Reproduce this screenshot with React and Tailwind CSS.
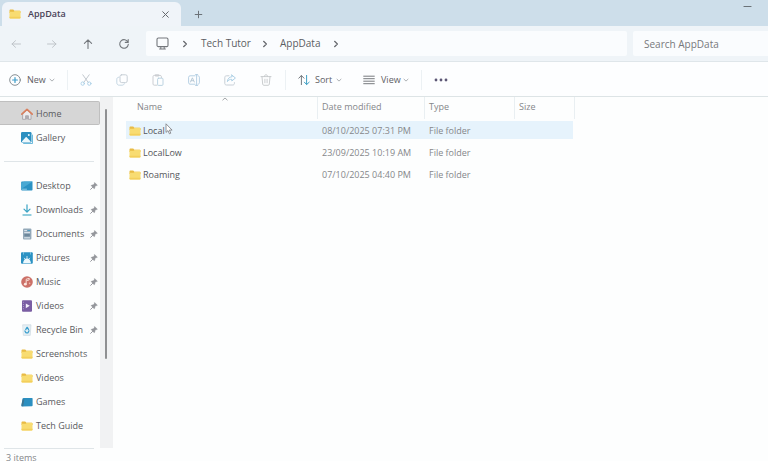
import React from "react";

function Folder({ className = "" }) {
  return (
    <svg viewBox="0 0 12 10" className={"h-[10px] w-3 shrink-0 " + className} aria-hidden="true">
      <path d="M0.5 1.3C.5.8.9.5 1.3.5h2.9L5.5 1.8h5.2c.5 0 .8.3.8.8V4H.5z" fill="#e9bb45" />
      <path d="M.5 2.8h4.2l1.2-1h4.9c.4 0 .7.3.7.7v6.2c0 .5-.3.8-.8.8H1.3c-.5 0-.8-.3-.8-.8z" fill="#f8dc72" />
      <path d="M.5 7.8h11v.9c0 .5-.3.8-.8.8H1.3c-.5 0-.8-.3-.8-.8z" fill="#f3cf5c" />
    </svg>
  );
}

function Glyph({ size = "size-3", children, box = "0 0 12 12" }) {
  return (
    <svg viewBox={box} className={size + " shrink-0"} fill="none" strokeLinecap="round" strokeLinejoin="round" aria-hidden="true">
      {children}
    </svg>
  );
}

const HomeIcon = () => (
  <Glyph>
    <path d="M2 5.5 6 2l4 3.5V11.3H7.4V7.8H4.6v3.5H2z" fill="#ececee" stroke="#a19da3" strokeWidth=".8" />
    <path d="M4.6 7.8h2.8v3.5H4.6z" fill="#aeabb0" />
    <path d="M.8 6.2 6 1.3l5.2 4.9" stroke="#d9805f" strokeWidth="1.7" />
  </Glyph>
);
const GalleryIcon = () => (
  <Glyph>
    <rect x="0" y="0" width="10.5" height="10.5" rx="1.2" fill="#2b8fc0" />
    <path d="M11 2.5c.6 0 1 .4 1 1V11c0 .6-.4 1-1 1H3c-.5 0-1-.4-1-1h9z" fill="#6ebbdc" />
    <path d="M.8 9.6 4.5 5.4c.4-.4.9-.4 1.3 0l3.9 4.2c-.3.4-.7.5-1 .5H2c-.6 0-1-.1-1.2-.5z" fill="#eef8fc" />
    <circle cx="7.8" cy="3" r="1" fill="#eef8fc" />
  </Glyph>
);
const DesktopIcon = () => (
  <Glyph>
    <path d="M1.2 1.5h10.3v8.2c0 .5-.3.8-.8.8H1.1c-.6 0-.9-.3-.9-.8V2.5c0-.6.4-1 1-1z" fill="#2b92c3" />
    <path d="M.2 3.2 3 1.5h8.5L.2 9z" fill="#49a9d3" />
    <path d="M1.5 9.2h4" stroke="#a9dcf0" strokeWidth=".8" />
  </Glyph>
);
const DownloadIcon = () => (
  <Glyph>
    <path d="M6 .8v7M3 5.2 6 8.2l3-3" stroke="#3aa3c4" strokeWidth="1.2" />
    <path d="M2 11h8" stroke="#6dbdd2" strokeWidth="1.3" />
  </Glyph>
);
const DocumentIcon = () => (
  <Glyph>
    <rect x="2" y=".4" width="8.4" height="11.2" rx="1" fill="#94a9b9" />
    <path d="M3.6 2.6h2M3.6 4.6h5M3.6 9.8h5" stroke="#e6eef4" strokeWidth=".9" />
    <rect x="3.4" y="6" width="5.4" height="2.4" fill="#6d889c" />
    <path d="M7 2.5h1.8" stroke="#4c9fc8" strokeWidth="1.2" />
  </Glyph>
);
const PictureIcon = () => (
  <Glyph>
    <rect x="0" y=".3" width="11.8" height="11.4" rx="1" fill="#2b92c3" />
    <path d="M2 11.2c.3-2.6 2-4.6 4-4.6s3.700 2 4 4.600z" fill="#ecf8fd" />
    <path d="M6 4.400v2.400M3.400 6.200l1 1.400M8.600 6.200l-1 1.400" stroke="#ecf8fd" strokeWidth=".8" />
    <path d="M2.500 0v2.200M9.500 0v2.200" stroke="#8fcbe4" strokeWidth=".8" />
  </Glyph>
);
const MusicIcon = () => (
  <Glyph>
    <circle cx="6" cy="6" r="5.8" fill="#cc7168" />
    <path d="M5.2 8V3.2l3-.9v1.6l-2.3.7" stroke="#fbe6df" strokeWidth=".9" />
    <circle cx="4.3" cy="8.2" r="1.4" fill="#fbe6df" />
    <circle cx="8.6" cy="7.4" r=".8" fill="#eeb7a7" />
  </Glyph>
);
const VideoIcon = () => (
  <Glyph>
    <rect x="1" y=".3" width="10" height="11.4" rx="1" fill="#7a5ea3" />
    <path d="M2.4 1.8v8.6" stroke="#c2b2da" strokeWidth=".9" strokeDasharray=".8 1.4" strokeLinecap="butt" />
    <path d="M4.8 3.4v4.8L8.8 5.8z" fill="#f3effa" />
  </Glyph>
);
const BinIcon = () => (
  <Glyph>
    <path d="M2 .8h8l-.8 10.6H2.8z" fill="#e5f0f5" stroke="#c6d4dc" strokeWidth=".6" />
    <path d="M6 3.4 4.7 5.6M6.3 3.4l1.3 2.2M8 6.8 7 8.8H5.4M3.9 7l.9 1.6" stroke="#3b9fcd" strokeWidth="1.2" />
  </Glyph>
);
const GamesIcon = () => (
  <Glyph>
    <path d="M2.6 2h8.4c.4 0 .6.2.6.6v6.8c0 .5-.3.8-.8.8L1 10.6c-.5 0-.8-.3-.7-.8l1.2-7c.1-.5.5-.8 1.1-.8z" fill="#2b8fc0" />
    <path d="M.4 9.6 1.7 3.5l1.6-.2-1.2 7.1z" fill="#3e7591" />
  </Glyph>
);
const Pin = () => (
  <Glyph size="size-2" box="0 0 10 10">
    <path d="M6 .8 9.2 4l-1 .5-.6-.1-1.5 1.5-.1 1.8-.8.6L1.4 4.5l.8-.8 1.7-.1 1.6-1.5-.1-.7z" fill="#94969b" stroke="#8e9095" strokeWidth=".6" />
    <path d="M3.2 6.8.8 9.2" stroke="#868890" strokeWidth="1.1" />
  </Glyph>
);

const Chevron = () => (
  <Glyph size="size-2" box="0 0 8 8">
    <path d="M2.6 1.3 5.4 4 2.6 6.7" stroke="#66686d" strokeWidth="1.2" />
  </Glyph>
);
const Caret = () => (
  <Glyph size="size-[6px]" box="0 0 6 6">
    <path d="M1 2.2 3 4.1 5 2.2" stroke="#a3a7ab" strokeWidth=".9" />
  </Glyph>
);

const Cut = () => (
  <Glyph>
    <path d="M2.8.8 8.2 8.4M9.2.8 3.8 8.4" stroke="#bcc3ca" strokeWidth=".9" />
    <circle cx="2.7" cy="9.6" r="1.7" stroke="#a9cfe6" strokeWidth=".9" />
    <circle cx="9.3" cy="9.6" r="1.7" stroke="#a9cfe6" strokeWidth=".9" />
  </Glyph>
);
const Copy = () => (
  <Glyph>
    <rect x="4" y=".8" width="7.2" height="7.8" rx="1.6" stroke="#c2cbd2" strokeWidth=".9" />
    <path d="M3 3.2c-1.3 0-2.2.7-2.2 2v3.6c0 1.5 1 2.4 2.4 2.4h3c1 0 1.8-.5 2.1-1.5" stroke="#bed3e0" strokeWidth=".9" />
  </Glyph>
);
const Paste = () => (
  <Glyph>
    <path d="M5 11.2H2.2c-.7 0-1.2-.5-1.2-1.2V2.6c0-.7.5-1.2 1.2-1.2h6c.7 0 1.2.5 1.2 1.2v1" stroke="#c6cace" strokeWidth=".9" />
    <path d="M3.7.7h3v1.4h-3z" stroke="#c6cace" strokeWidth=".8" />
    <rect x="5.6" y="4.2" width="5.4" height="7.2" rx="1" stroke="#b5cfdf" strokeWidth=".9" />
  </Glyph>
);
const Rename = () => (
  <Glyph>
    <path d="M7 1.8H2C1.2 1.8.6 2.4.6 3.2v5.6c0 .8.6 1.4 1.4 1.4h5M10 1.8c.8 0 1.4.6 1.4 1.4v5.6c0 .8-.6 1.4-1.4 1.4M8.6.6v10.8M7.5.6h2.2M7.5 11.4h2.2" stroke="#afcce1" strokeWidth=".9" />
    <path d="M2.5 8 4.4 3.8 6.3 8M3.2 6.7h2.4" stroke="#b2c5d3" strokeWidth=".9" />
  </Glyph>
);
const Share = () => (
  <Glyph>
    <path d="M5 1.8H2.4C1.4 1.8.8 2.4.8 3.4v6c0 1 .6 1.6 1.6 1.6h6.4c1 0 1.6-.6 1.6-1.6V8.6" stroke="#c2cbd2" strokeWidth=".9" />
    <path d="M7.8 1 11.4 4 7.8 7V5.3C5.8 5.2 4.5 6 3.4 7.6c.2-2.8 1.7-4.6 4.4-4.9z" stroke="#a4cbe2" strokeWidth=".9" />
  </Glyph>
);
const Trash = () => (
  <Glyph>
    <path d="M1 2.6h10M4.4 2.4c0-1 .7-1.6 1.6-1.6s1.6.6 1.6 1.6M2 2.8l.7 7.4c.1.7.5 1.1 1.2 1.1h4.2c.7 0 1.1-.4 1.2-1.1l.7-7.4M4.9 5.2v3.6M7.1 5.2v3.6" stroke="#c4c7ca" strokeWidth=".9" />
  </Glyph>
);

const actions = [
  ["Cut", Cut],
  ["Copy", Copy],
  ["Paste", Paste],
  ["Rename", Rename],
  ["Share", Share],
  ["Delete", Trash],
];

const places = [
  ["Desktop", DesktopIcon, true],
  ["Downloads", DownloadIcon, true],
  ["Documents", DocumentIcon, true],
  ["Pictures", PictureIcon, true],
  ["Music", MusicIcon, true],
  ["Videos", VideoIcon, true],
  ["Recycle Bin", BinIcon, true],
  ["Screenshots", Folder, false],
  ["Videos", Folder, false],
  ["Games", GamesIcon, false],
  ["Tech Guide", Folder, false],
];

const files = [
  ["Local", "08/10/2025 07:31 PM"],
  ["LocalLow", "23/09/2025 10:19 AM"],
  ["Roaming", "07/10/2025 04:40 PM"],
];

function Place({ label, Icon, pinned, active }) {
  return (
    <a
      href="#"
      className={
        "flex h-6 items-center gap-[3px] pt-[2px] pr-[2px] pl-[21px] " +
        (active ? "rounded-r-xs border border-l-0 border-[#bfbfbf] bg-[#d6d6d6]" : "")
      }
    >
      <Icon />
      <span className="flex-1 whitespace-nowrap">{label}</span>
      {pinned && <Pin />}
    </a>
  );
}

function TabBar() {
  return (
    <div className="flex h-[26px] shrink-0 bg-[#cddeea] pl-[2px]">
      <div className="mt-[2px] flex w-[179px] items-center rounded-t-md bg-[#f0f4f9] pr-[11px] pl-[7px]">
        <Folder />
        <span className="ml-[7px] flex-1 text-[9px] font-semibold text-[#4a4358]">AppData</span>
        <button aria-label="Close tab">
          <Glyph size="size-[9px]" box="0 0 9 9">
            <path d="M1.7 1.7l5.6 5.6M7.3 1.7 1.7 7.3" stroke="#66696e" />
          </Glyph>
        </button>
      </div>
      <button aria-label="New tab" className="mt-[2px] ml-[13px]">
        <Glyph size="size-[9px]" box="0 0 9 9">
          <path d="M4.5 1.2v6.6M1.2 4.5h6.6" stroke="#6b7278" />
        </Glyph>
      </button>
      <button aria-label="Minimize" className="mr-4 mb-[14px] ml-auto">
        <Glyph size="size-[9px]" box="0 0 9 9">
          <path d="M1 4.5h7" stroke="#6b7278" strokeWidth="1.2" />
        </Glyph>
      </button>
    </div>
  );
}

function AddressBar() {
  return (
    <div className="flex h-9 shrink-0 items-center gap-[6px] border-b border-[#dfe6ea] bg-[#eff4f8] text-[10px] text-[#5c5d63]">
      <div className="flex w-[140px] shrink-0 items-center gap-6 pl-[10px]">
        <button aria-label="Back">
          <Glyph>
            <path d="M10.500 6H2M5.500 2.700 2 6l3.500 3.300" stroke="#c0c5ca" />
          </Glyph>
        </button>
        <button aria-label="Forward">
          <Glyph>
            <path d="M1.500 6H10M6.500 2.700 10 6 6.500 9.300" stroke="#c0c5ca" />
          </Glyph>
        </button>
        <button aria-label="Up">
          <Glyph>
            <path d="M6 10.500V2M2.400 5.400 6 1.800l3.600 3.600" stroke="#74787d" strokeWidth="1.1" />
          </Glyph>
        </button>
        <button aria-label="Refresh">
          <Glyph>
            <path d="M10 4.300A4.300 4.300 0 1 0 10.300 6.400M10.200 1.500v2.900H7.300" stroke="#74787d" strokeWidth="1.1" />
          </Glyph>
        </button>
      </div>
      <nav className="flex h-[25px] flex-1 items-center rounded-xs bg-[#fafcfe] pl-[10px] whitespace-nowrap">
        <Glyph size="size-[13px]" box="0 0 13 13">
          <rect x="1" y="1" width="11" height="8.6" rx="1.4" stroke="#74777c" strokeWidth="1.1" />
          <path d="M4.8 9.8v1.8M8.2 9.8v1.8M3.6 12h5.8" stroke="#74777c" />
        </Glyph>
        <span className="ml-3 flex w-5 shrink-0"><Chevron /></span>
        <a href="#" className="w-[60px]">Tech Tutor</a>
        <span className="flex w-[19px] shrink-0"><Chevron /></span>
        <a href="#" className="w-[52px]">AppData</a>
        <Chevron />
      </nav>
      <input
        type="search"
        aria-label="Search AppData"
        placeholder="Search AppData"
        className="h-[25px] w-[135px] rounded-l-xs bg-[#fafcfe] pl-[11px] outline-none placeholder:text-[#77787c]"
      />
    </div>
  );
}

function Toolbar() {
  return (
    <div className="flex h-[35px] shrink-0 items-center border-b border-[#dde4e6] bg-[#fdfeff] pt-[2px] pl-[9px] text-[#5f6065]">
      <button className="flex w-[58px] items-center">
        <Glyph>
          <circle cx="6" cy="6" r="5.3" stroke="#7c8388" strokeWidth=".9" />
          <path d="M6 3.6v4.8M3.6 6h4.8" stroke="#3d9cc9" strokeWidth="1.2" />
        </Glyph>
        <span className="ml-[6px] w-[22px] text-left">New</span>
        <Caret />
      </button>
      <div className="flex h-5 w-[219px] items-center gap-6 border-x border-[#ecf1f4] pl-3">
        {actions.map(([label, Icon]) => (
          <button key={label} aria-label={label} disabled>
            <Icon />
          </button>
        ))}
      </div>
      <button className="ml-3 flex items-center">
        <Glyph>
          <path d="M3.4 10.6V1.6M.8 4.2l2.6-2.7L6 4.2" stroke="#74797e" />
          <path d="M8.6 1.4v9M6.4 8.2l2.2 2.3 2.6-2.3" stroke="#3f9fc3" />
        </Glyph>
        <span className="ml-[5px] w-[21px] text-left">Sort</span>
        <Caret />
      </button>
      <button className="ml-[21px] flex items-center">
        <Glyph>
          <path d="M.3 2.2h11.4M.3 4.7h11.4M.3 7.2h11.4M.3 9.7h11.4" stroke="#777a7e" strokeLinecap="butt" />
        </Glyph>
        <span className="ml-[6px] w-[22px] text-left">View</span>
        <Caret />
      </button>
      <div className="ml-3 flex h-5 items-center border-l border-[#ecf1f4] pl-3">
        <button aria-label="See more">
          <Glyph size="h-3 w-[14px]" box="0 0 14 12">
            <g fill="#5d5875">
              <circle cx="2" cy="6" r="1.4" />
              <circle cx="7" cy="6" r="1.4" />
              <circle cx="12" cy="6" r="1.4" />
            </g>
          </Glyph>
        </button>
      </div>
    </div>
  );
}

function Sidebar() {
  return (
    <aside className="flex w-[113px] shrink-0">
      <nav className="w-[100px] pt-1">
        <Place label="Home" Icon={HomeIcon} active />
        <Place label="Gallery" Icon={GalleryIcon} />
        <div className="flex h-6 items-center pr-[6px] pl-1">
          <hr className="w-full border-[#dfe5e8]" />
        </div>
        {places.map(([label, Icon, pinned]) => (
          <Place key={label + pinned} label={label} Icon={Icon} pinned={pinned} />
        ))}
      </nav>
      <div className="w-[13px] bg-[#f1f2f3] pt-3 pl-[5px]">
        <div className="h-[250px] w-[2px] rounded-full bg-[#8f9092]" />
      </div>
    </aside>
  );
}

function FileList() {
  const head = "h-[22px] border-r border-[#e9eff2] p-0 pb-[2px] font-normal ";
  const cell = "h-[22px] border-y-2 border-transparent bg-clip-padding p-0 pt-[2px] ";
  return (
    <main className="flex-1 overflow-hidden pl-[13px]">
      <table className="w-[449px] table-fixed border-separate border-spacing-0 text-left whitespace-nowrap text-[#85878a]">
        <colgroup>
          <col className="w-[192px]" />
          <col className="w-[107px]" />
          <col className="w-[90px]" />
          <col className="w-[60px]" />
        </colgroup>
        <thead>
          <tr>
            <th className={head + "relative pl-[11px]"}>
              Name
              <span className="absolute top-0 left-24">
                <Glyph size="size-[6px]" box="0 0 6 6">
                  <path d="M.8 3 3 1 5.2 3" stroke="#9a9da0" strokeWidth=".9" />
                </Glyph>
              </span>
            </th>
            <th className={head + "pl-1"}>Date modified</th>
            <th className={head + "pl-1"}>Type</th>
            <th className={head + "pl-1"}>Size</th>
          </tr>
        </thead>
        <tbody>
          {files.map(([name, date], i) => {
            const tone = i === 0 ? "bg-[#e6f3fc] " : "";
            return (
              <tr key={name}>
                <td className={cell + tone + "pl-[3px]"}>
                  <span className="flex items-center gap-[2px] text-[#55565a]">
                    <Folder />
                    <span className="relative font-medium">
                      {name}
                      {i === 0 && (
                        <svg viewBox="0 0 8 12" className="absolute -top-px left-[22px] h-3 w-2" aria-hidden="true">
                          <path d="M1 .8v8.6l2-1.8 1.4 3.2 1.4-.6-1.4-3.1h2.7z" fill="#fff" stroke="#77797d" strokeWidth=".8" />
                        </svg>
                      )}
                    </span>
                  </span>
                </td>
                <td className={cell + tone + "pl-1"}>{date}</td>
                <td className={cell + tone + "pl-1"}>File folder</td>
                <td className={cell + tone + "border-r-2"} />
              </tr>
            );
          })}
        </tbody>
      </table>
    </main>
  );
}

export default function App() {
  return (
    <div className="flex h-screen flex-col overflow-hidden bg-[#fdfefe] font-['Open_Sans','Noto_Sans',sans-serif] text-[9px] text-[#5a5b60]">
      <TabBar />
      <AddressBar />
      <Toolbar />
      <div className="flex min-h-0 flex-1 overflow-hidden">
        <Sidebar />
        <FileList />
      </div>
      <footer className="h-[13px] shrink-0 px-1 text-[#85878a]">
        <div className="w-[90px] border-t border-[#dfe5e8] pl-[2px] leading-[18px]">3 items</div>
      </footer>
    </div>
  );
}
